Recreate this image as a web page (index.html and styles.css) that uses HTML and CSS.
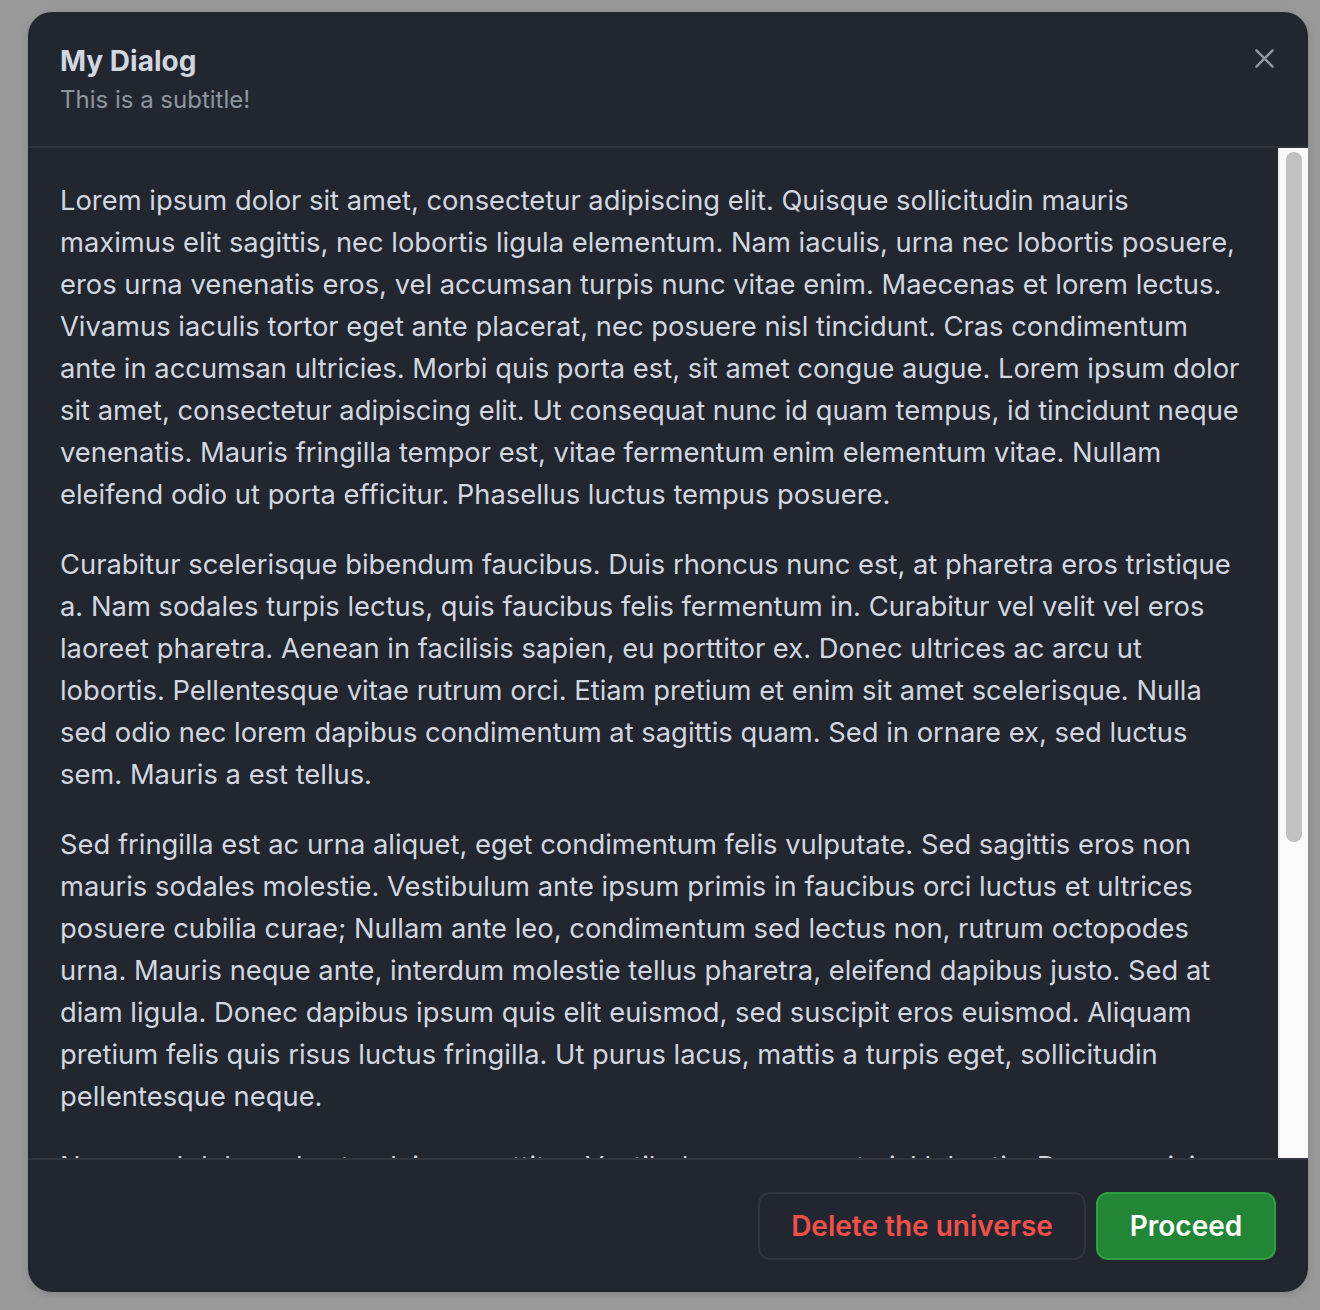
FILE: index.html
```html
<!DOCTYPE html>
<html lang="en">
<head>
    <meta charset="UTF-8">
    <meta name="viewport" content="width=device-width, initial-scale=1.0">
    <title>My Dialog</title>
    <link rel="stylesheet" href="styles.css">
</head>
<body>
    <div class="dialog" role="dialog" aria-labelledby="dialog-title">
        <div class="dialog-header">
            <div class="dialog-titles">
                <h1 class="dialog-title" id="dialog-title">My Dialog</h1>
                <p class="dialog-subtitle">This is a subtitle!</p>
            </div>
            <button class="close-btn" aria-label="Close">
                <svg width="20" height="20" viewBox="0 0 20 20" fill="none">
                    <path d="M1.5 1.5l17 17M18.5 1.5l-17 17" stroke="currentColor" stroke-width="2.6" stroke-linecap="round"/>
                </svg>
            </button>
        </div>

        <div class="dialog-main">
            <div class="dialog-body">
                <p>Lorem ipsum dolor sit amet, consectetur adipiscing elit. Quisque sollicitudin mauris maximus elit sagittis, nec lobortis ligula elementum. Nam iaculis, urna nec lobortis posuere, eros urna venenatis eros, vel accumsan turpis nunc vitae enim. Maecenas et lorem lectus. Vivamus iaculis tortor eget ante placerat, nec posuere nisl tincidunt. Cras condimentum ante in accumsan ultricies. Morbi quis porta est, sit amet congue augue. Lorem ipsum dolor sit amet, consectetur adipiscing elit. Ut consequat nunc id quam tempus, id tincidunt neque venenatis. Mauris fringilla tempor est, vitae fermentum enim elementum vitae. Nullam eleifend odio ut porta efficitur. Phasellus luctus tempus posuere.</p>
                <p>Curabitur scelerisque bibendum faucibus. Duis rhoncus nunc est, at pharetra eros tristique a. Nam sodales turpis lectus, quis faucibus felis fermentum in. Curabitur vel velit vel eros laoreet pharetra. Aenean in facilisis sapien, eu porttitor ex. Donec ultrices ac arcu ut lobortis. Pellentesque vitae rutrum orci. Etiam pretium et enim sit amet scelerisque. Nulla sed odio nec lorem dapibus condimentum at sagittis quam. Sed in ornare ex, sed luctus sem. Mauris a est tellus.</p>
                <p>Sed fringilla est ac urna aliquet, eget condimentum felis vulputate. Sed sagittis eros non mauris sodales molestie. Vestibulum ante ipsum primis in faucibus orci luctus et ultrices posuere cubilia curae; Nullam ante leo, condimentum sed lectus non, rutrum octopodes urna. Mauris neque ante, interdum molestie tellus pharetra, eleifend dapibus justo. Sed at diam ligula. Donec dapibus ipsum quis elit euismod, sed suscipit eros euismod. Aliquam pretium felis quis risus luctus fringilla. Ut purus lacus, mattis a turpis eget, sollicitudin pellentesque neque.</p>
                <p>Nunc sed dolor vel est pulvinar porttitor. Vestibulum ac urna at nisl lobortis. Donec a nisi vitae nulla dictum tincidunt. Integer iaculis, nunc eget molestie feugiat, lorem sem viverra nunc, at hendrerit elit lectus non arcu. Praesent vulputate arcu sed tellus lobortis, vitae aliquet risus malesuada.</p>
            </div>
            <div class="scrollbar">
                <div class="scrollbar-thumb"></div>
            </div>
        </div>

        <div class="dialog-footer">
            <button class="btn btn-danger">Delete the universe</button>
            <button class="btn btn-primary">Proceed</button>
        </div>
    </div>
</body>
</html>
```

FILE: styles.css
```css
* {
    box-sizing: border-box;
}

html, body {
    height: 100%;
}

body {
    margin: 0;
    padding: 12px 12px 18px 28px;
    background-color: #9a9a9a;
    font-family: Inter, "Noto Sans", sans-serif;
}

.dialog {
    width: 1280px;
    height: 1280px;
    display: flex;
    flex-direction: column;
    background: #22262e;
    border-radius: 24px;
    overflow: hidden;
    box-shadow: 0 2px 8px rgba(0, 0, 0, 0.15);
}

.dialog-header {
    display: flex;
    justify-content: space-between;
    align-items: flex-start;
    padding: 28px 32px 28px 32px;
    border-bottom: 2px solid #30353d;
    flex-shrink: 0;
}

.dialog-title {
    margin: 0;
    font-size: 28px;
    line-height: 42px;
    font-weight: 700;
    color: #d1d7e0;
}

.dialog-subtitle {
    margin: 0;
    font-size: 24px;
    line-height: 36px;
    color: #8d96a0;
}

.close-btn {
    margin: 0 -6px 0 0;
    width: 36px;
    height: 36px;
    padding: 0;
    display: flex;
    align-items: center;
    justify-content: center;
    background: none;
    border: none;
    color: #8d96a0;
    cursor: pointer;
}

.close-btn svg {
    width: 19px;
    height: 19px;
}

.dialog-main {
    flex: 1;
    min-height: 0;
    display: flex;
}

.dialog-body {
    flex: 1;
    overflow: hidden;
    padding: 32px;
    font-size: 27.35px;
    line-height: 42px;
    color: #d1d7e0;
}

.dialog-body p {
    margin: 0 0 28px;
}

/* fake light scrollbar, the screenshot shows one */
.scrollbar {
    width: 30px;
    flex-shrink: 0;
    background: #fafafa;
    border-left: 2px solid #ececec;
    padding: 4px 6px 0 6px;
}

.scrollbar-thumb {
    height: 690px;
    background: #c1c1c1;
    border-radius: 8px;
}

.dialog-footer {
    display: flex;
    justify-content: flex-end;
    gap: 10px;
    padding: 32px;
    border-top: 2px solid #30353d;
    flex-shrink: 0;
}

.btn {
    height: 68px;
    padding: 0;
    border-radius: 12px;
    font-family: Inter, "Noto Sans", sans-serif;
    font-size: 28px;
    font-weight: 600;
    white-space: nowrap;
    cursor: pointer;
}

.btn-danger {
    width: 328px;
    background: #212630;
    border: 2px solid #30353d;
    color: #f0504a;
}

.btn-primary {
    width: 180px;
    background: #238636;
    border: 2px solid #2ea043;
    color: #ffffff;
}
```
